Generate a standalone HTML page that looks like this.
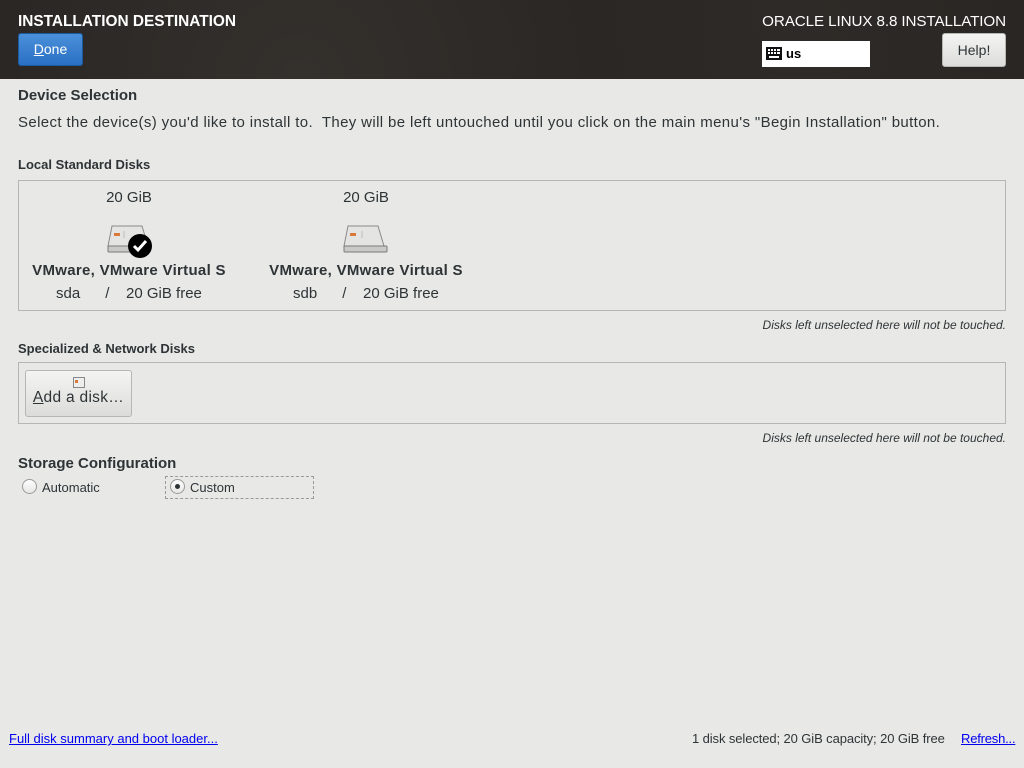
<!DOCTYPE html>
<html><head><meta charset="utf-8"><style>
*{margin:0;padding:0;box-sizing:border-box}
body{width:1024px;height:768px;background:#e8e8e7;font-family:"Liberation Sans","DejaVu Sans",sans-serif;color:#2e3436;position:relative;overflow:hidden}
.hdr{position:absolute;left:0;top:0;width:1024px;height:79px;background:#2a2624;background:radial-gradient(circle at 300px 80px,#34302c 0,#2b2725 40%,#2e2a27 70%,#2a2623 100%)}
.a{position:absolute;white-space:nowrap}
.btn{position:absolute;border:1px solid #b6b6b3;border-radius:3px;background:linear-gradient(#f4f4f3,#dcdcda);color:#2e3436;text-align:center}
.box{position:absolute;border:1px solid #b6b6b3}
.radio{position:absolute;width:15px;height:15px;border:1px solid #9a9a98;border-radius:50%;background:linear-gradient(#fff,#e6e6e4)}
</style></head><body>
<div class="hdr"></div>
<div class="a" style="left:18px;top:13px;font-size:15.4px;font-weight:bold;color:#fff">INSTALLATION DESTINATION</div>
<div class="btn" style="left:18px;top:33px;width:65px;height:33px;background:linear-gradient(#4a90d9,#2a70c4);border-color:#1c5aa0;color:#fff;font-size:14px;line-height:31px"><u>D</u>one</div>
<div class="a" style="right:18px;top:13px;font-size:15.2px;color:#fff;letter-spacing:-0.1px">ORACLE LINUX 8.8 INSTALLATION</div>
<div class="a" style="left:762px;top:41px;width:108px;height:26px;background:#fff"></div>
<svg class="a" style="left:766px;top:47px" width="16" height="13"><rect x="0" y="0" width="16" height="13" fill="#111"/><g fill="#fff"><rect x="2" y="2" width="2" height="2"/><rect x="5" y="2" width="2" height="2"/><rect x="8" y="2" width="2" height="2"/><rect x="11" y="2" width="3" height="2"/><rect x="2" y="5" width="2" height="2"/><rect x="5" y="5" width="2" height="2"/><rect x="8" y="5" width="2" height="2"/><rect x="11" y="5" width="3" height="2"/><rect x="3" y="9" width="10" height="2"/></g></svg>
<div class="a" style="left:786px;top:46px;font-size:13px;font-weight:bold;color:#000">us</div>
<div class="btn" style="left:942px;top:33px;width:64px;height:34px;font-size:14px;line-height:32px">Help!</div>

<div class="a" style="left:18px;top:87px;font-size:15px;font-weight:bold">Device Selection</div>
<div class="a" style="left:18px;top:114px;font-size:15px;letter-spacing:0.37px">Select the device(s) you'd like to install to.&nbsp; They will be left untouched until you click on the main menu's "Begin Installation" button.</div>
<div class="a" style="left:18px;top:157px;font-size:13px;font-weight:bold">Local Standard Disks</div>
<div class="box" style="left:18px;top:180px;width:988px;height:131px"></div>

<div class="a" style="left:29px;top:189px;width:200px;text-align:center;font-size:15px">20 GiB</div>
<svg class="a" style="left:106px;top:224px" width="48" height="34"><path d="M6 2h30l6 20H2z" fill="#e4e4e2" stroke="#8a8a88"/><rect x="2" y="22" width="40" height="6" rx="1" fill="#c9c9c7" stroke="#7a7a78"/><rect x="8" y="9" width="6" height="3" fill="#d87a3a"/><line x1="18" y1="7" x2="18" y2="14" stroke="#bbb"/><circle cx="34" cy="22" r="12" fill="#000"/><path d="M28 22l4 4 8-9" stroke="#fff" stroke-width="3" fill="none"/></svg>
<div class="a" style="left:29px;top:262px;width:200px;text-align:center;font-size:15px;font-weight:bold;letter-spacing:0.3px">VMware, VMware Virtual S</div>
<div class="a" style="left:56px;top:285px;font-size:15px">sda&nbsp;&nbsp;&nbsp;&nbsp;&nbsp;&nbsp;/&nbsp;&nbsp;&nbsp;&nbsp;20 GiB free</div>

<div class="a" style="left:266px;top:189px;width:200px;text-align:center;font-size:15px">20 GiB</div>
<svg class="a" style="left:342px;top:224px" width="48" height="34"><path d="M6 2h30l6 20H2z" fill="#e4e4e2" stroke="#8a8a88"/><rect x="2" y="22" width="43" height="6" rx="1" fill="#c9c9c7" stroke="#7a7a78"/><rect x="8" y="9" width="6" height="3" fill="#d87a3a"/><line x1="20" y1="7" x2="20" y2="14" stroke="#bbb"/></svg>
<div class="a" style="left:266px;top:262px;width:200px;text-align:center;font-size:15px;font-weight:bold;letter-spacing:0.3px">VMware, VMware Virtual S</div>
<div class="a" style="left:293px;top:285px;font-size:15px">sdb&nbsp;&nbsp;&nbsp;&nbsp;&nbsp;&nbsp;/&nbsp;&nbsp;&nbsp;&nbsp;20 GiB free</div>

<div class="a" style="right:18px;top:318px;font-size:12px;font-style:italic">Disks left unselected here will not be touched.</div>
<div class="a" style="left:18px;top:341px;font-size:13px;font-weight:bold">Specialized &amp; Network Disks</div>
<div class="box" style="left:18px;top:362px;width:988px;height:62px"></div>
<div class="btn" style="left:25px;top:370px;width:107px;height:47px"><div style="margin:6px auto 0;width:12px;height:11px;border:1px solid #888;background:#eee;position:relative"><div style="position:absolute;left:1px;top:2px;width:3px;height:3px;background:#d87a3a"></div></div><div style="font-size:15.5px;margin-top:1px;letter-spacing:0.3px"><u>A</u>dd a disk…</div></div>
<div class="a" style="right:18px;top:431px;font-size:12px;font-style:italic">Disks left unselected here will not be touched.</div>

<div class="a" style="left:18px;top:455px;font-size:15px;font-weight:bold">Storage Configuration</div>
<div class="radio" style="left:22px;top:479px"></div>
<div class="a" style="left:42px;top:480px;font-size:13px">Automatic</div>
<div class="a" style="left:165px;top:476px;width:149px;height:23px;border:1px dashed #999"></div>
<div class="radio" style="left:170px;top:479px"><div style="position:absolute;left:4px;top:4px;width:5px;height:5px;border-radius:50%;background:#2e3436"></div></div>
<div class="a" style="left:190px;top:480px;font-size:13px">Custom</div>

<div class="a" style="left:9px;top:731px;font-size:13px;color:#0000ee;text-decoration:underline">Full disk summary and boot loader...</div>
<div class="a" style="left:692px;top:731px;font-size:13px;letter-spacing:-0.1px">1 disk selected; 20 GiB capacity; 20 GiB free</div>
<div class="a" style="left:961px;top:731px;font-size:13px;color:#0000ee;text-decoration:underline;letter-spacing:-0.2px">Refresh...</div>
</body></html>
